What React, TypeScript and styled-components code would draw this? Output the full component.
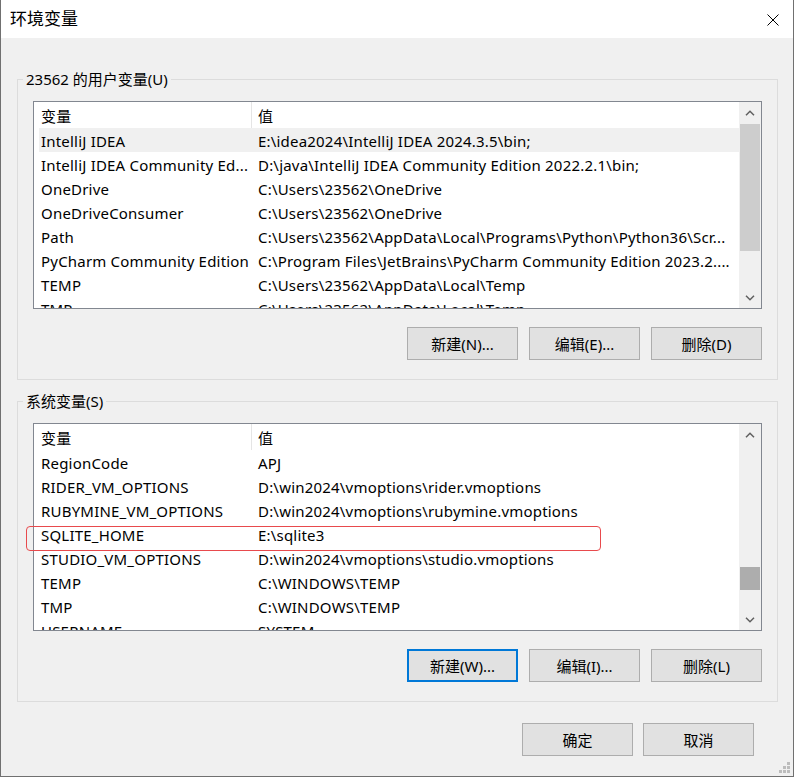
import React from 'react';
import styled, { createGlobalStyle } from 'styled-components';

const GlobalStyle = createGlobalStyle`
  html, body { margin: 0; padding: 0; background: #f0f0f0; }
  body { font-family: "Noto Sans", "Noto Sans CJK SC", sans-serif; }
  *, *::before, *::after { box-sizing: border-box; }
`;

const FONT = `"Noto Sans", "Noto Sans CJK SC", sans-serif`;

const Window = styled.div`
  position: relative;
  width: 794px;
  height: 777px;
  background: #f0f0f0;
  border-left: 1px solid #707070;
  border-right: 1px solid #707070;
  border-bottom: 1px solid #707070;
  display: flex;
  flex-direction: column;
  overflow: hidden;
  font-family: ${FONT};
  font-size: 15px;
  color: #000;
`;

const TitleBar = styled.div`
  height: 38px;
  flex: none;
  background: #fff;
  display: flex;
  align-items: center;
  justify-content: space-between;
  padding: 0 14px 0 9px;
`;

const Title = styled.div`
  font-size: 17px;
  line-height: 20px;
  color: #000;
`;

const CloseButton = styled.div`
  width: 12px;
  height: 12px;
  display: flex;
  margin-top: 1px;
`;

const Body = styled.div`
  flex: 1;
  display: flex;
  flex-direction: column;
  padding: 31px 15px 0 16px;
`;

const Group = styled.fieldset<{ $mt?: number }>`
  margin: ${(p) => p.$mt ?? 0}px 0 0 0;
  padding: 0;
  border: 1px solid #dcdcdc;
  min-width: 0;
`;

const Legend = styled.legend`
  margin-left: 5px;
  padding: 0 3px;
  font-size: 15px;
  line-height: 20px;
  color: #000;
`;

const GroupInner = styled.div`
  padding: 12px 15px 19px 15px;
  display: flex;
  flex-direction: column;
`;

const List = styled.div`
  height: 208px;
  border: 1px solid #828790;
  background: #fff;
  display: flex;
`;

const TableArea = styled.div`
  flex: 1;
  min-width: 0;
  overflow: hidden;
  padding-left: 5px;
`;

const Row = styled.div<{ $header?: boolean; $selected?: boolean }>`
  display: grid;
  grid-template-columns: 212px 1fr;
  height: ${(p) => (p.$header ? 26 : 24)}px;
  background: ${(p) => (p.$selected ? '#f0f0f0' : 'transparent')};
`;

const Cell = styled.div<{ $second?: boolean; $header?: boolean }>`
  white-space: nowrap;
  overflow: hidden;
  line-height: ${(p) => (p.$header ? 26 : 24)}px;
  padding-top: 1px;
  padding-left: ${(p) => (p.$second ? (p.$header ? 6 : 7) : 2)}px;
  border-left: ${(p) => (p.$second && p.$header ? '1px solid #e5e5e5' : 'none')};
  font-size: 15px;
  letter-spacing: 0.2px;
  color: #000;
`;

const ScrollBar = styled.div`
  width: 22px;
  flex: none;
  background: #f0f0f0;
  display: flex;
  flex-direction: column;
`;

const ArrowBox = styled.div<{ $h: number }>`
  height: ${(p) => p.$h}px;
  flex: none;
  display: flex;
  align-items: center;
  justify-content: center;
`;

const Track = styled.div`
  flex: 1;
  display: flex;
  flex-direction: column;
`;

const Thumb = styled.div<{ $top: number; $height: number; $active?: boolean }>`
  margin: ${(p) => p.$top}px 1px 0 1px;
  height: ${(p) => p.$height}px;
  background: ${(p) => (p.$active ? '#adadad' : '#cdcdcd')};
`;

const ButtonRow = styled.div<{ $mt: number; $pr?: number; $gap: number }>`
  display: flex;
  justify-content: flex-end;
  gap: ${(p) => p.$gap}px;
  margin-top: ${(p) => p.$mt}px;
  padding-right: ${(p) => p.$pr ?? 0}px;
`;

const Button = styled.div<{ $focused?: boolean }>`
  width: 111px;
  height: 33px;
  background: #e1e1e1;
  border: ${(p) => (p.$focused ? '2px solid #0078d7' : '1px solid #adadad')};
  display: flex;
  align-items: center;
  justify-content: center;
  font-size: 15px;
  color: #000;
  white-space: nowrap;
`;

const Highlight = styled.div`
  position: absolute;
  left: 25px;
  top: 526px;
  width: 575px;
  height: 25px;
  border: 1.5px solid #e84a4d;
  border-radius: 4px;
  pointer-events: none;
`;

const Grip = styled.div`
  position: absolute;
  right: 2px;
  bottom: 2px;
  width: 12px;
  height: 12px;
  display: flex;
`;

type Item = { name: string; value: string; selected?: boolean };

const userVars: Item[] = [
  { name: 'IntelliJ IDEA', value: 'E:\\idea2024\\IntelliJ IDEA 2024.3.5\\bin;', selected: true },
  { name: 'IntelliJ IDEA Community Ed...', value: 'D:\\java\\IntelliJ IDEA Community Edition 2022.2.1\\bin;' },
  { name: 'OneDrive', value: 'C:\\Users\\23562\\OneDrive' },
  { name: 'OneDriveConsumer', value: 'C:\\Users\\23562\\OneDrive' },
  { name: 'Path', value: 'C:\\Users\\23562\\AppData\\Local\\Programs\\Python\\Python36\\Scr...' },
  { name: 'PyCharm Community Edition', value: 'C:\\Program Files\\JetBrains\\PyCharm Community Edition 2023.2....' },
  { name: 'TEMP', value: 'C:\\Users\\23562\\AppData\\Local\\Temp' },
  { name: 'TMP', value: 'C:\\Users\\23562\\AppData\\Local\\Temp' },
];

const sysVars: Item[] = [
  { name: 'RegionCode', value: 'APJ' },
  { name: 'RIDER_VM_OPTIONS', value: 'D:\\win2024\\vmoptions\\rider.vmoptions' },
  { name: 'RUBYMINE_VM_OPTIONS', value: 'D:\\win2024\\vmoptions\\rubymine.vmoptions' },
  { name: 'SQLITE_HOME', value: 'E:\\sqlite3' },
  { name: 'STUDIO_VM_OPTIONS', value: 'D:\\win2024\\vmoptions\\studio.vmoptions' },
  { name: 'TEMP', value: 'C:\\WINDOWS\\TEMP' },
  { name: 'TMP', value: 'C:\\WINDOWS\\TEMP' },
  { name: 'USERNAME', value: 'SYSTEM' },
];

const Chevron: React.FC<{ up?: boolean }> = ({ up }) => (
  <svg width="10" height="6" viewBox="0 0 10 6">
    <polyline
      points={up ? '1,5.3 5,1.3 9,5.3' : '1,0.7 5,4.7 9,0.7'}
      fill="none"
      stroke="#606060"
      strokeWidth="1.5"
    />
  </svg>
);

const VarList: React.FC<{ items: Item[]; thumbTop: number; thumbHeight: number; active?: boolean }> = ({
  items,
  thumbTop,
  thumbHeight,
  active,
}) => (
  <List>
    <TableArea>
      <Row $header>
        <Cell $header>变量</Cell>
        <Cell $header $second>
          值
        </Cell>
      </Row>
      {items.map((it, i) => (
        <Row key={i} $selected={it.selected}>
          <Cell>{it.name}</Cell>
          <Cell $second>{it.value}</Cell>
        </Row>
      ))}
    </TableArea>
    <ScrollBar>
      <ArrowBox $h={22}>
        <Chevron up />
      </ArrowBox>
      <Track>
        <Thumb $top={thumbTop} $height={thumbHeight} $active={active} />
      </Track>
      <ArrowBox $h={21}>
        <Chevron />
      </ArrowBox>
    </ScrollBar>
  </List>
);

export default function App() {
  return (
    <>
      <GlobalStyle />
      <Window>
        <TitleBar>
          <Title>环境变量</Title>
          <CloseButton>
            <svg width="12" height="12" viewBox="0 0 12 12">
              <line x1="0.5" y1="0.5" x2="11.5" y2="11.5" stroke="#000" strokeWidth="1" />
              <line x1="11.5" y1="0.5" x2="0.5" y2="11.5" stroke="#000" strokeWidth="1" />
            </svg>
          </CloseButton>
        </TitleBar>
        <Body>
          <Group>
            <Legend>23562 的用户变量(U)</Legend>
            <GroupInner>
              <VarList items={userVars} thumbTop={0} thumbHeight={127} />
              <ButtonRow $mt={18} $gap={11}>
                <Button>新建(N)...</Button>
                <Button>编辑(E)...</Button>
                <Button>删除(D)</Button>
              </ButtonRow>
            </GroupInner>
          </Group>
          <Group $mt={11}>
            <Legend>系统变量(S)</Legend>
            <GroupInner>
              <VarList items={sysVars} thumbTop={121} thumbHeight={23} active />
              <ButtonRow $mt={18} $gap={11}>
                <Button $focused>新建(W)...</Button>
                <Button>编辑(I)...</Button>
                <Button>删除(L)</Button>
              </ButtonRow>
            </GroupInner>
          </Group>
          <ButtonRow $mt={21} $pr={24} $gap={10}>
            <Button>确定</Button>
            <Button>取消</Button>
          </ButtonRow>
        </Body>
        <Highlight />
        <Grip>
          <svg width="12" height="12" viewBox="0 0 12 12">
            <rect x="8" y="0" width="3" height="3" fill="#bcbcbc" />
            <rect x="4" y="4" width="3" height="3" fill="#bcbcbc" />
            <rect x="8" y="4" width="3" height="3" fill="#bcbcbc" />
            <rect x="0" y="8" width="3" height="3" fill="#bcbcbc" />
            <rect x="4" y="8" width="3" height="3" fill="#bcbcbc" />
            <rect x="8" y="8" width="3" height="3" fill="#bcbcbc" />
          </svg>
        </Grip>
      </Window>
    </>
  );
}
